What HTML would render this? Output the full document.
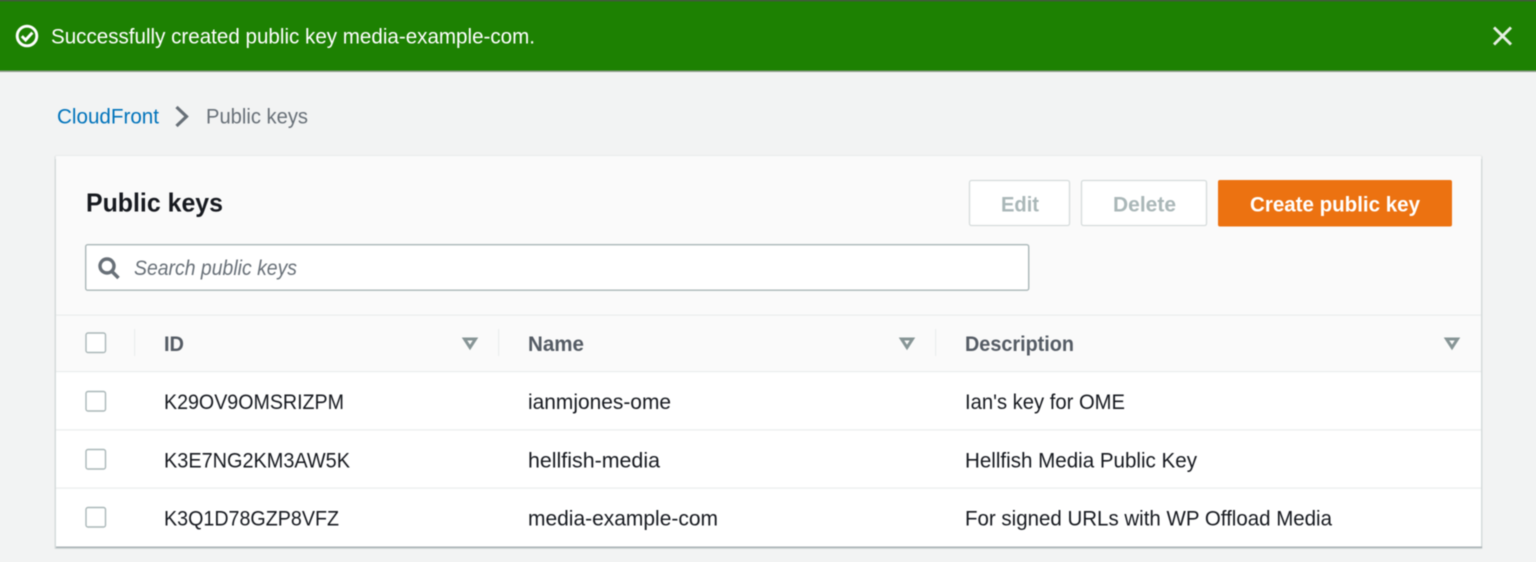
<!DOCTYPE html>
<html><head><meta charset="utf-8"><style>
html,body{margin:0;padding:0;background:#f2f3f3;width:1536px;height:562px;overflow:hidden}
svg{display:block;overflow:visible}
text{font-family:"Liberation Sans",sans-serif;font-size:21.5px;fill:#16191f}
.b{font-weight:700}
</style></head><body>
<svg width="1536" height="562" viewBox="0 0 1536 562" xmlns="http://www.w3.org/2000/svg" style="filter:blur(.4px)">
<rect x="-10" y="-10" width="1556" height="582" fill="#f2f3f3"/>
<!-- banner -->
<rect x="-10" y="-10" width="1556" height="81" fill="#1d8102"/>
<rect x="-10" y="-10" width="1556" height="11.500" fill="#3f5c38"/>
<rect x="-10" y="70.500" width="1556" height="1.500" fill="#8a9a88"/>
<circle cx="27" cy="36" r="9.800" fill="none" stroke="#fff" stroke-width="2.900"/>
<path d="M21.800 36.200l3.800 3.800 6.800-7.400" fill="none" stroke="#fff" stroke-width="2.900"/>
<text x="51" y="43.500" textLength="484" lengthAdjust="spacingAndGlyphs" style="fill:#fff">Successfully created public key media-example-com.</text>
<path d="M1494 27.500l17 17M1511 27.500l-17 17" fill="none" stroke="#e6efe3" stroke-width="2.900"/>
<!-- breadcrumb -->
<text x="57" y="123.500" textLength="102" lengthAdjust="spacingAndGlyphs" style="fill:#0073bb">CloudFront</text>
<path d="M176.500 107l10 9.500-10 9.500" fill="none" stroke="#687078" stroke-width="3.200"/>
<text x="206" y="123.500" textLength="102" lengthAdjust="spacingAndGlyphs" style="fill:#687078">Public keys</text>
<!-- card -->
<rect x="54.500" y="156" width="1428" height="393" rx="1" fill="#d5dbdb"/>
<rect x="55" y="155" width="1427" height="4" fill="#e9ebeb"/>
<rect x="56" y="156" width="1425" height="390.500" fill="#fff"/>
<rect x="56" y="156" width="1425" height="216" fill="#fafafa"/>
<rect x="56" y="546.500" width="1426" height="1.500" fill="#a9b2b6"/>
<rect x="56" y="314.500" width="1425" height="1.200" fill="#eaeded"/>
<rect x="56" y="371" width="1425" height="1.200" fill="#eaeded"/>
<rect x="56" y="429.300" width="1425" height="1.200" fill="#eaeded"/>
<rect x="56" y="487.500" width="1425" height="1.200" fill="#eaeded"/>
<text class="b" x="86" y="211.500" textLength="137" lengthAdjust="spacingAndGlyphs" style="font-size:26px">Public keys</text>
<!-- buttons -->
<rect x="969.500" y="180.500" width="100" height="45" rx="2" fill="#fff" stroke="#d5dbdb" stroke-width="1.300"/>
<text class="b" x="1001" y="211.500" textLength="38" lengthAdjust="spacingAndGlyphs" style="fill:#aab7b8">Edit</text>
<rect x="1081.500" y="180.500" width="125" height="45" rx="2" fill="#fff" stroke="#d5dbdb" stroke-width="1.300"/>
<text class="b" x="1113" y="211.500" textLength="63" lengthAdjust="spacingAndGlyphs" style="fill:#aab7b8">Delete</text>
<rect x="1218" y="180" width="234" height="46.500" rx="2" fill="#ec7211"/>
<text class="b" x="1250" y="211.500" textLength="170" lengthAdjust="spacingAndGlyphs" style="fill:#fff">Create public key</text>
<!-- search -->
<rect x="85.700" y="244.700" width="943" height="45.500" rx="2" fill="#fff" stroke="#aab7b8" stroke-width="1.400"/>
<circle cx="107" cy="266" r="7" fill="none" stroke="#687078" stroke-width="3.400"/>
<path d="M112 271.500l6.500 6.500" fill="none" stroke="#687078" stroke-width="3.400"/>
<text x="134" y="275" textLength="163" lengthAdjust="spacingAndGlyphs" style="fill:#687078;font-style:italic">Search public keys</text>
<!-- header -->
<rect x="86" y="333" width="19.500" height="19.500" rx="2" fill="#fff" stroke="#aab7b8" stroke-width="1.400"/>
<rect x="134" y="329" width="1.200" height="27" fill="#eaeded"/>
<rect x="498" y="329" width="1.200" height="27" fill="#eaeded"/>
<rect x="935" y="329" width="1.200" height="27" fill="#eaeded"/>
<text class="b" x="164" y="351" textLength="20" lengthAdjust="spacingAndGlyphs" style="fill:#545b64">ID</text>
<text class="b" x="528" y="351" textLength="56" lengthAdjust="spacingAndGlyphs" style="fill:#545b64">Name</text>
<text class="b" x="965" y="351" textLength="109" lengthAdjust="spacingAndGlyphs" style="fill:#545b64">Description</text>
<path d="M464.500 339h11l-5.500 8.500z" fill="none" stroke="#879596" stroke-width="3"/>
<path d="M901.500 339h11l-5.500 8.500z" fill="none" stroke="#879596" stroke-width="3"/>
<path d="M1446.500 339h11l-5.500 8.500z" fill="none" stroke="#879596" stroke-width="3"/>
<!-- rows -->
<rect x="86" y="391.500" width="19.500" height="19.500" rx="2" fill="#fff" stroke="#aab7b8" stroke-width="1.400"/>
<rect x="86" y="449.500" width="19.500" height="19.500" rx="2" fill="#fff" stroke="#aab7b8" stroke-width="1.400"/>
<rect x="86" y="507.500" width="19.500" height="19.500" rx="2" fill="#fff" stroke="#aab7b8" stroke-width="1.400"/>
<text x="164" y="409" textLength="180" lengthAdjust="spacingAndGlyphs">K29OV9OMSRIZPM</text>
<text x="528" y="409" textLength="143" lengthAdjust="spacingAndGlyphs">ianmjones-ome</text>
<text x="965" y="409" textLength="160" lengthAdjust="spacingAndGlyphs">Ian's key for OME</text>
<text x="164" y="467.500" textLength="186" lengthAdjust="spacingAndGlyphs">K3E7NG2KM3AW5K</text>
<text x="528" y="467.500" textLength="132" lengthAdjust="spacingAndGlyphs">hellfish-media</text>
<text x="965" y="467.500" textLength="232" lengthAdjust="spacingAndGlyphs">Hellfish Media Public Key</text>
<text x="164" y="525.500" textLength="175" lengthAdjust="spacingAndGlyphs">K3Q1D78GZP8VFZ</text>
<text x="528" y="525.500" textLength="190" lengthAdjust="spacingAndGlyphs">media-example-com</text>
<text x="965" y="525.500" textLength="367" lengthAdjust="spacingAndGlyphs">For signed URLs with WP Offload Media</text>
</svg>
</body></html>
